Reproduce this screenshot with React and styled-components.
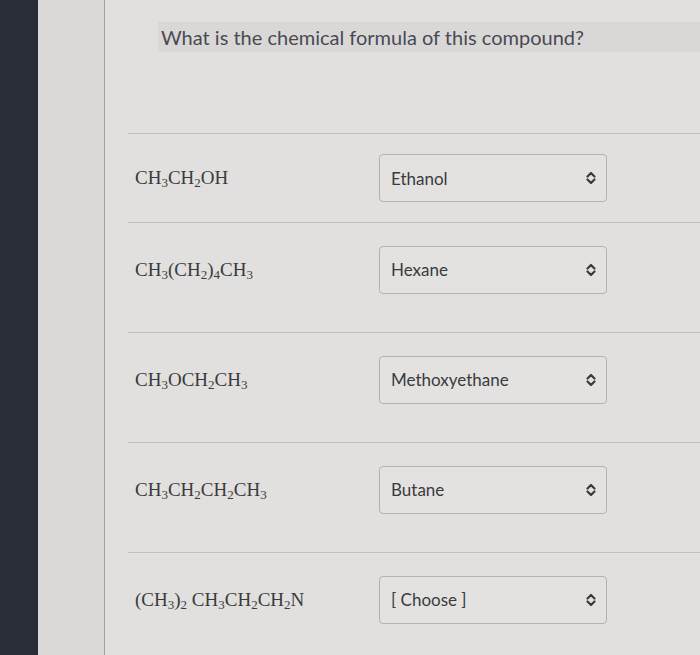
import React from 'react';
import styled, { createGlobalStyle } from 'styled-components';

const GlobalStyle = createGlobalStyle`
  body {
    margin: 0;
    background-color: #dfdedc;
    font-family: Lato, "Liberation Sans", sans-serif;
  }
`

const Page = styled.div`
  display: flex;
  height: 655px;
  overflow: hidden;
`

const Sidebar = styled.div`
  width: 38px;
  flex-shrink: 0;
  background-color: #282d36;
`

const Gutter = styled.div`
  width: 66px;
  flex-shrink: 0;
  background-color: #dbdad8;
  border-right: 1px solid #a3a2a1;
`

const Main = styled.div`
  flex: 1;
  display: flex;
  flex-direction: column;
  background-color: #e1e0de;
`

const Header = styled.div`
  flex-shrink: 0;
  margin: 22px 0 81px 53px;
  height: 30px;
  display: flex;
  align-items: center;
  padding-left: 3px;
  background-color: #d9d8d6;
  color: #4a4a55;
  font-size: 20px;
`

const List = styled.div`
  flex-shrink: 0;
  margin-left: 23px;
  display: flex;
  flex-direction: column;
`

const Row = styled.div`
  display: flex;
  align-items: center;
  box-sizing: border-box;
  height: 110px;
  padding-bottom: 16px;
  border-top: 1px solid #c2c1bf;

  &:first-child {
    height: 89px;
    padding-bottom: 0;
  }
`

const Formula = styled.div`
  width: 244px;
  padding-left: 7px;
  font-family: "Liberation Serif", serif;
  font-size: 19px;
  color: #3b3b3d;

  sub {
    font-size: 13px;
    vertical-align: -3px;
    line-height: 0;
  }
`

const Select = styled.div`
  width: 228px;
  height: 48px;
  box-sizing: border-box;
  display: flex;
  align-items: center;
  justify-content: space-between;
  padding: 0 9px 0 11px;
  border: 1px solid #b3b2b0;
  border-radius: 4px;
  background-color: #e3e2e0;
  color: #3a3a3e;
  font-size: 17px;
`

const Chevron = () => (
  <svg width="12" height="16" viewBox="0 0 12 16">
    <path d="M2.5 6.5 L6 3 L9.5 6.5 M2.5 9.5 L6 13 L9.5 9.5" fill="none" stroke="#3a3a3a" strokeWidth="2.2" strokeLinecap="round" strokeLinejoin="round" />
  </svg>
)

const rows = [
  { formula: <>CH<sub>3</sub>CH<sub>2</sub>OH</>, answer: 'Ethanol' },
  { formula: <>CH<sub>3</sub>(CH<sub>2</sub>)<sub>4</sub>CH<sub>3</sub></>, answer: 'Hexane' },
  { formula: <>CH<sub>3</sub>OCH<sub>2</sub>CH<sub>3</sub></>, answer: 'Methoxyethane' },
  { formula: <>CH<sub>3</sub>CH<sub>2</sub>CH<sub>2</sub>CH<sub>3</sub></>, answer: 'Butane' },
  { formula: <>(CH<sub>3</sub>)<sub>2</sub> CH<sub>3</sub>CH<sub>2</sub>CH<sub>2</sub>N</>, answer: '[ Choose ]' },
]

function App() {
  return (
    <Page>
      <GlobalStyle />
      <Sidebar />
      <Gutter />
      <Main>
        <Header>What is the chemical formula of this compound?</Header>
        <List>
          {rows.map((r, i) => (
            <Row key={i}>
              <Formula>{r.formula}</Formula>
              <Select>
                <span>{r.answer}</span>
                <Chevron />
              </Select>
            </Row>
          ))}
        </List>
      </Main>
    </Page>
  )
}

export default App
